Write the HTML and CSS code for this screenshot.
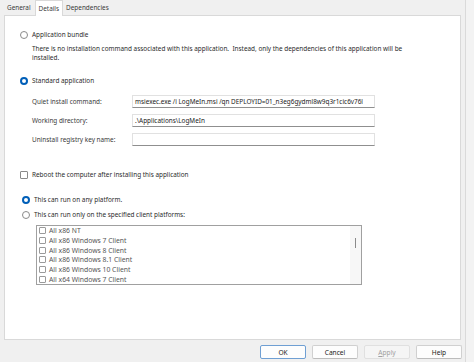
FILE: index.html
```html
<!DOCTYPE html>
<html lang="en">
<head>
    <meta charset="UTF-8">
    <title>Details</title>
    <link rel="stylesheet" href="styles.css">
</head>
<body>
    <div class="window">
        <div class="dialog">
            <div class="tabs">
                <div class="tab">General</div>
                <div class="tab active">Details</div>
                <div class="tab">Dependencies</div>
            </div>
            <div class="panel">
                <div class="opt bundle"><span class="radio"></span>Application bundle</div>
                <p class="desc">There is no installation command associated with this application.&nbsp; Instead, only the dependencies of this application will be installed.</p>
                <div class="opt standard"><span class="radio on"></span>Standard application</div>

                <div class="fields">
                    <div class="field">
                        <label>Quiet install command:</label>
                        <div class="input">msiexec.exe /i LogMeIn.msi /qn DEPLOYID=01_n3eg6gydml8w9q3r1cic6v76l</div>
                    </div>
                    <div class="field">
                        <label>Working directory:</label>
                        <div class="input">.\Applications\LogMeIn</div>
                    </div>
                    <div class="field">
                        <label>Uninstall registry key name:</label>
                        <div class="input"></div>
                    </div>
                </div>

                <div class="opt reboot"><span class="check"></span>Reboot the computer after installing this application</div>

                <div class="opt platform any"><span class="radio on"></span>This can run on any platform.</div>
                <div class="opt platform only"><span class="radio"></span>This can run only on the specified client platforms:</div>

                <div class="listbox">
                    <ul>
                        <li><span class="check small"></span>All x86 NT</li>
                        <li><span class="check small"></span>All x86 Windows 7 Client</li>
                        <li><span class="check small"></span>All x86 Windows 8 Client</li>
                        <li><span class="check small"></span>All x86 Windows 8.1 Client</li>
                        <li><span class="check small"></span>All x86 Windows 10 Client</li>
                        <li><span class="check small"></span>All x64 Windows 7 Client</li>
                    </ul>
                    <div class="scroll"><span class="thumb"></span></div>
                </div>
            </div>
            <div class="buttons">
                <button class="btn default">OK</button>
                <button class="btn">Cancel</button>
                <button class="btn" disabled><u>A</u>pply</button>
                <button class="btn">Help</button>
            </div>
        </div>
        <div class="edge"></div>
    </div>
</body>
</html>
```

FILE: styles.css
```css
* {
    box-sizing: border-box;
}

body {
    margin: 0;
    background: #f0f0f0;
    font-family: 'Noto Sans', 'Open Sans', sans-serif;
    font-size: 6.4px;
    color: #2b2b2b;
}

.window {
    display: flex;
    width: 474px;
    height: 362px;
    overflow: hidden;
}

.dialog {
    width: 465px;
    display: flex;
    flex-direction: column;
}

.edge {
    flex: 1;
    border-left: 1px solid #dadada;
    background: #f3f3f3;
}

/* tab strip */
.tabs {
    display: flex;
    height: 15px;
    padding-left: 4px;
    align-items: flex-end;
}

.tab {
    height: 14px;
    line-height: 14px;
    padding: 0 3px;
    color: #3a3a3a;
}

.tab.active {
    height: 16px;
    line-height: 15px;
    margin-bottom: -1px;
    margin-left: 1px;
    padding: 0 3px;
    background: #fff;
    border: 1px solid #d9d9d9;
    border-bottom: none;
    position: relative;
    z-index: 1;
}

.panel {
    margin: 0 4px;
    height: 325px;
    background: #fff;
    border: 1px solid #d9d9d9;
    padding-left: 15px;
}

/* options */
.opt {
    display: flex;
    align-items: center;
    height: 9px;
    line-height: 9px;
}

.radio {
    width: 8px;
    height: 8px;
    border-radius: 50%;
    border: 1px solid #8a8a8a;
    background: #fff;
    margin-right: 4px;
    flex-shrink: 0;
}

.radio.on {
    border: 2.5px solid #005fb8;
}

.check {
    width: 8px;
    height: 8px;
    border: 1px solid #8a8a8a;
    border-radius: 1px;
    background: #fff;
    margin-right: 4px;
    flex-shrink: 0;
}

.bundle {
    margin-top: 14px;
}

.desc {
    margin: 5px 0 0 12px;
    width: 372px;
    line-height: 9px;
}

.standard {
    margin-top: 14px;
}

.fields {
    margin-top: 10px;
    margin-left: 12px;
    display: flex;
    flex-direction: column;
    gap: 6px;
}

.field {
    display: flex;
    align-items: center;
    height: 13px;
}

.field label {
    width: 100px;
    color: #3a3a3a;
}

.input {
    width: 243px;
    height: 13px;
    line-height: 12px;
    padding: 0 2px;
    border: 1px solid #e1e1e1;
    border-bottom-color: #8f8f8f;
    white-space: nowrap;
    overflow: hidden;
    color: #1a1a1a;
}

.reboot {
    margin-top: 24px;
}

.platform {
    padding-left: 2px;
}

.any {
    margin-top: 16px;
}

.only {
    margin-top: 6px;
}

.listbox {
    display: flex;
    margin: 6px 0 0 16px;
    width: 326px;
    height: 60px;
    border: 1px solid #a0a0a0;
    background: #fff;
}

.listbox ul {
    list-style: none;
    margin: 0;
    padding: 0 0 0 2px;
    flex: 1;
}

.listbox li {
    display: flex;
    align-items: center;
    height: 9.7px;
    font-size: 6.8px;
    color: #555;
}

.check.small {
    width: 7px;
    height: 7px;
    margin-right: 3px;
    border-color: #9a9a9a;
}

.scroll {
    width: 11px;
    background: #f7f7f7;
    display: flex;
    justify-content: center;
    padding-top: 12px;
}

.thumb {
    width: 1px;
    height: 10px;
    background: #8a8a8a;
}

/* bottom buttons */
.buttons {
    display: flex;
    justify-content: flex-end;
    gap: 6px;
    margin-top: 5px;
    padding-right: 3px;
}

.btn {
    width: 46px;
    height: 14px;
    padding: 0;
    font-family: inherit;
    font-size: 6.6px;
    color: #1a1a1a;
    background: #fdfdfd;
    border: 1px solid #d0d0d0;
    border-bottom-color: #bcbcbc;
    border-radius: 2px;
}

.btn.default {
    border-color: #6f9fd3;
}

.btn:disabled {
    color: #a0a0a0;
    background: #f5f5f5;
    border-color: #e0e0e0;
}
```
